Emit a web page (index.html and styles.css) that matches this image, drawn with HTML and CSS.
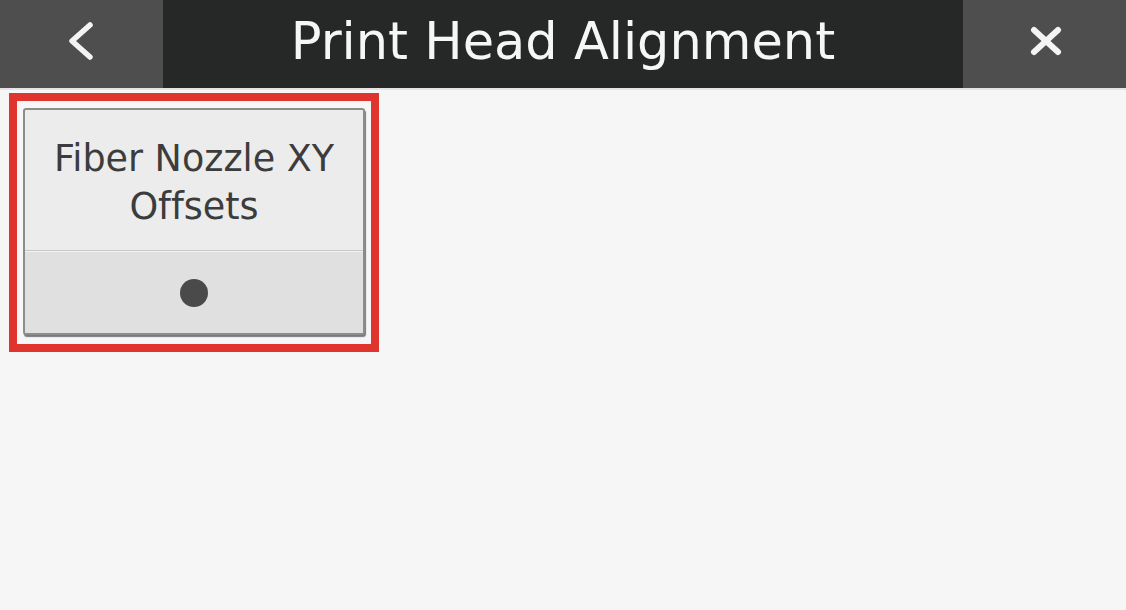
FILE: index.html
```html
<!DOCTYPE html>
<html>
<head>
<meta charset="utf-8">
<link rel="stylesheet" href="styles.css">
</head>
<body>
<header class="topbar">
  <div class="side-btn">
    <svg class="icon-back" width="30" height="40" viewBox="0 0 30 40">
      <polyline points="24,4 6,20 24,36" fill="none" stroke="#f4f4f4" stroke-width="5.5" stroke-linecap="round" stroke-linejoin="round"/>
    </svg>
  </div>
  <div class="title">Print Head Alignment</div>
  <div class="side-btn">
    <svg class="icon-close" width="34" height="30" viewBox="0 0 34 30">
      <line x1="5" y1="4" x2="29" y2="26" stroke="#f4f4f4" stroke-width="6" stroke-linecap="round"/>
      <line x1="29" y1="4" x2="5" y2="26" stroke="#f4f4f4" stroke-width="6" stroke-linecap="round"/>
    </svg>
  </div>
</header>
<main class="content">
  <div class="selected">
    <div class="card">
      <div class="card-label">Fiber Nozzle XY<br>Offsets</div>
      <div class="card-status"><span class="dot"></span></div>
    </div>
  </div>
</main>
</body>
</html>
```

FILE: styles.css
```css
html, body {
  margin: 0;
  padding: 0;
}
body {
  width: 1126px;
  height: 610px;
  background: #f5f6f5;
  font-family: "DejaVu Sans", sans-serif;
  font-variant-ligatures: none;
  overflow: hidden;
}
.topbar {
  display: grid;
  grid-template-columns: 163px 1fr 163px;
  height: 88px;
  background: #262727;
  border-bottom: 2px solid #e4e4e4;
}
.side-btn {
  background: #4e4e4e;
  display: flex;
  align-items: center;
  justify-content: center;
}
.icon-back {
  margin-left: -1px;
  margin-top: -6px;
}
.icon-close {
  margin-left: 2px;
  margin-top: -7px;
}
.title {
  color: #f6f6f6;
  font-size: 51px;
  display: flex;
  align-items: center;
  justify-content: center;
  padding-bottom: 6px;
}
.content {
  padding: 3px 0 0 9px;
}
.selected {
  width: 342px;
  border: 8px solid #e0342e;
  padding: 7px 6px 9px 6px;
}
.card {
  width: 338px;
  height: 223px;
  border: 2px solid #8c8c8c;
  border-radius: 3px;
  box-shadow: 1px 2px 1px #7a7a7a;
  background: #ececec;
  display: flex;
  flex-direction: column;
  overflow: hidden;
}
.card-label {
  height: 134px;
  padding-top: 6px;
  display: flex;
  align-items: center;
  justify-content: center;
  text-align: center;
  color: #3c3c3c;
  font-size: 36.5px;
  line-height: 48px;
  border-bottom: 1px solid #c6c6c6;
}
.card-status {
  flex: 1;
  background: #e0e0e0;
  border-top: 1px solid #f2f2f2;
  display: flex;
  align-items: center;
  justify-content: center;
}
.dot {
  width: 28px;
  height: 28px;
  border-radius: 50%;
  background: #4a4a4a;
}
```
